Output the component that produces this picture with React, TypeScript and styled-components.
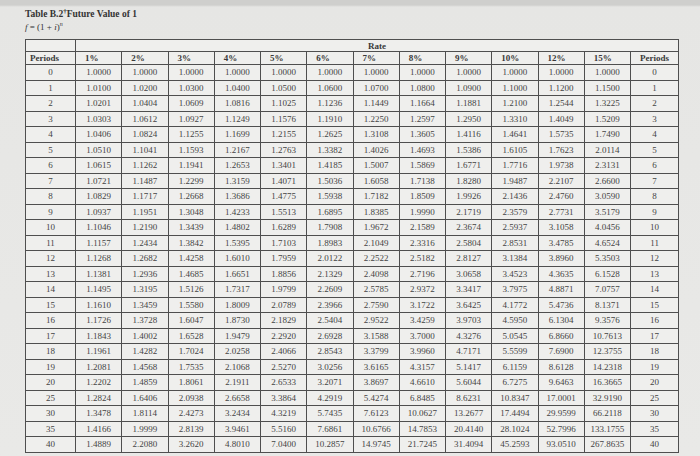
import React from "react"
import styled, { createGlobalStyle } from "styled-components"

const GlobalStyle = createGlobalStyle`
  html, body {
    margin: 0;
    padding: 0;
    background: #e5e5e3;
  }
  body {
    font-family: "Liberation Serif", "DejaVu Serif", serif;
    color: #3a3a3a;
  }
`

const rates = [1, 2, 3, 4, 5, 6, 7, 8, 9, 10, 12, 15]
const periods = [
  0, 1, 2, 3, 4, 5, 6, 7, 8, 9, 10, 11, 12, 13, 14, 15, 16, 17, 18, 19, 20, 25,
  30, 35, 40,
]

const futureValue = (rate: number, n: number) =>
  Math.pow(1 + rate / 100, n).toFixed(4)

const Page = styled.div`
  width: 700px;
  height: 456px;
  overflow: hidden;
  box-sizing: border-box;
  background: linear-gradient(180deg, #cfcfcd 0, #cfcfcd 5px, #e6e6e4 7px, #e9e9e7 100%);
  padding: 8px 0 0 25px;
`

const Title = styled.div`
  font-weight: bold;
  font-size: 9.5px;
  line-height: 12px;
  color: #333;

  sup {
    font-size: 7px;
    vertical-align: 4px;
    line-height: 0;
  }
`

const Formula = styled.div`
  font-size: 9px;
  line-height: 11px;
  margin: 2px 0 6px;
  color: #333;

  i {
    font-style: italic;
  }
  sup {
    font-size: 6px;
    vertical-align: 4px;
    line-height: 0;
  }
`

const Table = styled.table`
  border-collapse: collapse;
  table-layout: fixed;
  width: 653px;
  background: #efefed;
`

const Cell = styled.td`
  border: 1px solid #4f4f4f;
  text-align: center;
  padding: 0;
  height: 14.5px;
  font-size: 9px;
  line-height: 10px;
  color: #444;
  white-space: nowrap;
`

const HeadCell = styled(Cell)<{ $align?: "left" | "center"; $pad?: number }>`
  text-align: ${(p) => p.$align ?? "left"};
  padding-left: ${(p) => p.$pad ?? 0}px;
  font-weight: bold;
  color: #3a3a3a;
`

const HeadRow = styled.tr<{ $h: number }>`
  td {
    height: ${(p) => p.$h}px;
  }
`

export default function App() {
  return (
    <>
      <GlobalStyle />
      <Page>
        <Title>
          Table B.2<sup>†</sup>Future Value of 1
        </Title>
        <Formula>
          <i>f</i> = (1 + <i>i</i>)<sup><i>n</i></sup>
        </Formula>
        <Table>
          <colgroup>
            <col style={{ width: 50 }} />
            {rates.map((r) => (
              <col key={r} style={{ width: 46.25 }} />
            ))}
            <col style={{ width: 48 }} />
          </colgroup>
          <tbody>
            <HeadRow $h={11}>
              <HeadCell />
              <HeadCell $align="center" colSpan={rates.length + 1}>
                Rate
              </HeadCell>
            </HeadRow>
            <HeadRow $h={12}>
              <HeadCell $pad={4}>Periods</HeadCell>
              {rates.map((r) => (
                <HeadCell $pad={9} key={r}>
                  {r}%
                </HeadCell>
              ))}
              <HeadCell $align="center">Periods</HeadCell>
            </HeadRow>
            {periods.map((n) => (
              <tr key={n}>
                <Cell>{n}</Cell>
                {rates.map((r) => (
                  <Cell key={r}>{futureValue(r, n)}</Cell>
                ))}
                <Cell>{n}</Cell>
              </tr>
            ))}
          </tbody>
        </Table>
      </Page>
    </>
  )
}
